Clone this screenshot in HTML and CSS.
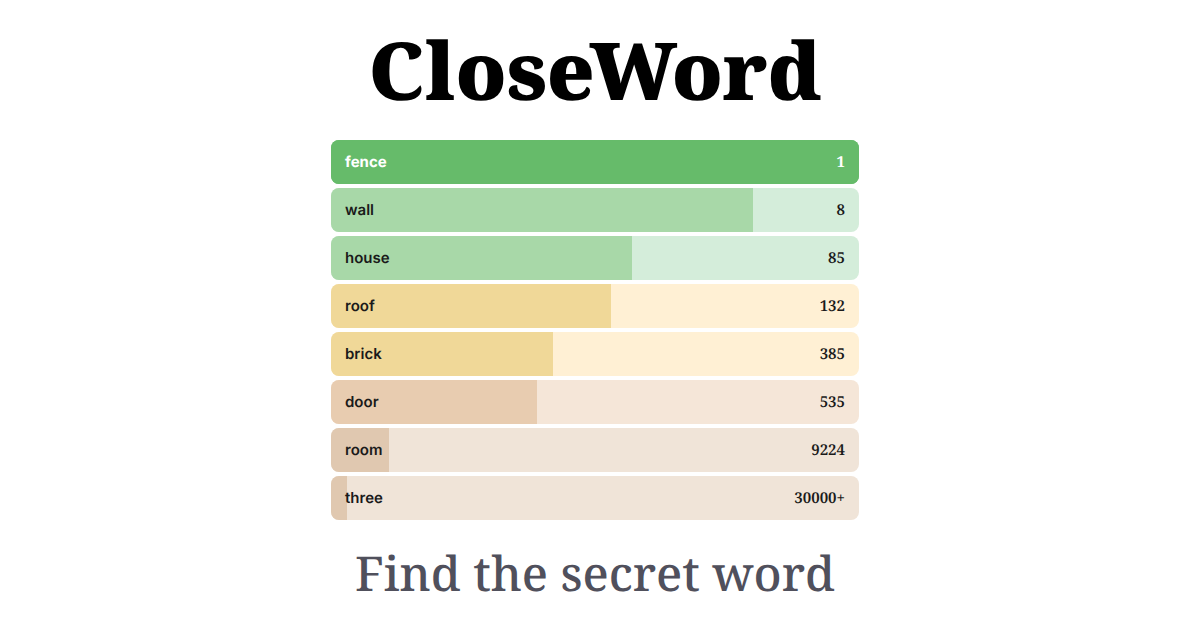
FILE: index.html
```html
<!DOCTYPE html>
<html lang="en">
<head>
  <meta charset="UTF-8">
  <title>CloseWord</title>
  <link rel="stylesheet" href="styles.css">
</head>
<body>
<main class="card">
  <h1 class="title">CloseWord</h1>
  <ol class="guesses">
    <li class="guess exact"><div class="bar" style="width:100%"></div><span class="word">fence</span><span class="rank">1</span></li>
    <li class="guess close"><div class="bar" style="width:80%"></div><span class="word">wall</span><span class="rank">8</span></li>
    <li class="guess close"><div class="bar" style="width:57%"></div><span class="word">house</span><span class="rank">85</span></li>
    <li class="guess near"><div class="bar" style="width:53%"></div><span class="word">roof</span><span class="rank">132</span></li>
    <li class="guess near"><div class="bar" style="width:42%"></div><span class="word">brick</span><span class="rank">385</span></li>
    <li class="guess far"><div class="bar" style="width:39%"></div><span class="word">door</span><span class="rank">535</span></li>
    <li class="guess distant"><div class="bar" style="width:11%"></div><span class="word">room</span><span class="rank">9224</span></li>
    <li class="guess distant"><div class="bar" style="width:3%"></div><span class="word">three</span><span class="rank">30000+</span></li>
  </ol>
  <p class="tagline">Find the secret word</p>
</main>
</body>
</html>
```
FILE: styles.css
```css
*{box-sizing:border-box;}
body{margin:0;background:#fff;color:#1a1a1a;font-family:"Noto Serif","DejaVu Serif",serif;text-rendering:geometricPrecision;}
.card{display:flex;flex-direction:column;align-items:center;padding:16px 26px 16px 16px;}
.title{margin:0;color:#000;font-size:80px;font-weight:900;line-height:108px;}
.guesses{display:grid;gap:4px;width:100%;max-width:528px;margin:16px 0;padding:0;list-style:none;}
.guess{position:relative;display:flex;align-items:center;justify-content:space-between;height:44px;padding:0 14px;border-radius:8px;overflow:hidden;font-size:15px;line-height:20px;font-weight:600;}
.bar{position:absolute;top:0;bottom:0;left:0;}
.word,.rank{position:relative;}
.word{padding-bottom:1px;font-family:Inter,sans-serif;}
.exact{background:#66bb6a;color:#fff;font-weight:700;}
.exact .bar{background:#66bb6a;}
.close{background:#d4edda;}
.close .bar{background:#a8d8a8;}
.near{background:#fff0d4;}
.near .bar{background:#f0d898;}
.far{background:#f5e6d8;}
.far .bar{background:#e8ccb0;}
.distant{background:#f0e4d8;}
.distant .bar{background:#e0c8b0;}
.tagline{margin:0;color:#50505c;font-size:48px;font-weight:500;line-height:76px;}
```
